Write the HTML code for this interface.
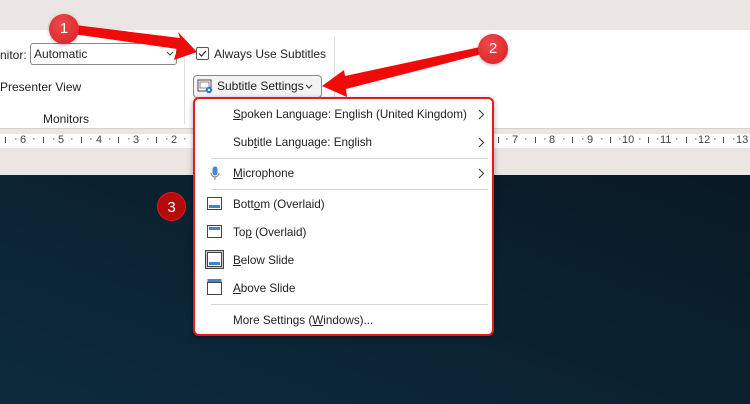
<!DOCTYPE html>
<html><head><meta charset="utf-8"><style>
*{margin:0;padding:0;box-sizing:border-box}
body{width:750px;height:404px;overflow:hidden;position:relative;background:#ebe5e3;font-family:"Liberation Sans",sans-serif;color:#222}
.abs{position:absolute}
.t{font-size:12px;white-space:nowrap}
.ribbon{left:0;top:30px;width:750px;height:99px;background:#fff;border-bottom:1px solid #d6d0ce}
.ruler{left:0;top:134px;width:750px;height:14px;background:#fff;font-size:11px;color:#444}
.slide{left:0;top:175px;width:750px;height:229px;background:linear-gradient(200deg,#081a24 0%,#0b2433 60%,#0c2b3d 100%)}
.menu{left:193px;top:97px;width:301px;height:239px;background:#fff;border:2px solid #e21b1b;border-radius:6px;box-shadow:0 2px 6px rgba(0,0,0,.35)}
.mi{position:absolute;left:38px;font-size:11.7px;color:#222;white-space:nowrap}
.sep{position:absolute;left:16px;right:4px;height:1px;background:#d4d4d4}
.chev{position:absolute;left:283px}
.badge{border-radius:50%;color:#fff;font-size:15px;text-align:center;font-family:"Liberation Sans",sans-serif}
</style></head><body>
<div class="abs ribbon"></div>
<div class="abs t" style="left:0;top:48px">nitor:</div>
<div class="abs" style="left:30px;top:43px;width:147px;height:22px;border:1px solid #8a8a8a;border-radius:3px;background:#fff"></div>
<div class="abs t" style="left:34px;top:47px">Automatic</div>
<svg class="abs" style="left:166px;top:51px" width="8" height="6"><path d="M1 1l3 3 3-3" stroke="#444" fill="none"/></svg>
<div class="abs t" style="left:0;top:80px">Presenter View</div>
<div class="abs t" style="left:43px;top:112px">Monitors</div>
<div class="abs" style="left:184px;top:36px;width:1px;height:88px;background:#dedede"></div>
<div class="abs" style="left:334px;top:36px;width:1px;height:88px;background:#dedede"></div>
<div class="abs" style="left:196px;top:47px;width:13px;height:13px;border:1px solid #555;border-radius:2px;background:#fff"></div>
<svg class="abs" style="left:196px;top:47px" width="13" height="13"><path d="M3 6.5l2.5 2.5 4.5-5" stroke="#222" stroke-width="1.2" fill="none"/></svg>
<div class="abs t" style="left:214px;top:47px">Always Use Subtitles</div>
<div class="abs" style="left:193px;top:75px;width:129px;height:23px;border:1px solid #888;border-radius:4px;background:#f3f3f3"></div>
<svg class="abs" style="left:197px;top:79px" width="17" height="16"><rect x="1" y="1" width="13" height="11" fill="#fff" stroke="#444"/><rect x="3" y="3" width="9" height="6" fill="none" stroke="#666" stroke-width=".8"/><circle cx="12" cy="11" r="3.2" fill="#2b7bd6"/><circle cx="12" cy="11" r="1.2" fill="#fff"/></svg>
<div class="abs t" style="left:217px;top:79px">Subtitle Settings</div>
<svg class="abs" style="left:305px;top:84px" width="8" height="6"><path d="M1 1l3 3 3-3" stroke="#333" fill="none"/></svg>
<div class="abs ruler"></div>
<div class="abs" style="left:0;top:134px;width:750px;height:14px;font-size:11px;color:#444">
<span class="abs" style="left:4px;top:0">ı</span><span class="abs" style="left:14px;top:-1px">·</span><span class="abs" style="left:20px;top:0">6</span><span class="abs" style="left:32px;top:-1px">·</span><span class="abs" style="left:42px;top:0">ı</span><span class="abs" style="left:52px;top:-1px">·</span><span class="abs" style="left:58px;top:0">5</span><span class="abs" style="left:70px;top:-1px">·</span><span class="abs" style="left:80px;top:0">ı</span><span class="abs" style="left:89px;top:-1px">·</span><span class="abs" style="left:96px;top:0">4</span><span class="abs" style="left:108px;top:-1px">·</span><span class="abs" style="left:117px;top:0">ı</span><span class="abs" style="left:127px;top:-1px">·</span><span class="abs" style="left:133px;top:0">3</span><span class="abs" style="left:146px;top:-1px">·</span><span class="abs" style="left:155px;top:0">ı</span><span class="abs" style="left:165px;top:-1px">·</span><span class="abs" style="left:171px;top:0">2</span><span class="abs" style="left:183px;top:-1px">·</span>
<span class="abs" style="left:497px;top:0">ı</span><span class="abs" style="left:505px;top:-1px">·</span><span class="abs" style="left:512px;top:0">7</span><span class="abs" style="left:524px;top:-1px">·</span><span class="abs" style="left:534px;top:0">ı</span><span class="abs" style="left:543px;top:-1px">·</span><span class="abs" style="left:549px;top:0">8</span><span class="abs" style="left:562px;top:-1px">·</span><span class="abs" style="left:571px;top:0">ı</span><span class="abs" style="left:581px;top:-1px">·</span><span class="abs" style="left:587px;top:0">9</span><span class="abs" style="left:600px;top:-1px">·</span><span class="abs" style="left:609px;top:0">ı</span><span class="abs" style="left:618px;top:-1px">·</span><span class="abs" style="left:622px;top:0">10</span><span class="abs" style="left:638px;top:-1px">·</span><span class="abs" style="left:647px;top:0">ı</span><span class="abs" style="left:656px;top:-1px">·</span><span class="abs" style="left:660px;top:0">11</span><span class="abs" style="left:675px;top:-1px">·</span><span class="abs" style="left:685px;top:0">ı</span><span class="abs" style="left:694px;top:-1px">·</span><span class="abs" style="left:698px;top:0">12</span><span class="abs" style="left:713px;top:-1px">·</span><span class="abs" style="left:722px;top:0">ı</span><span class="abs" style="left:732px;top:-1px">·</span><span class="abs" style="left:736px;top:0">13</span>
</div>
<div class="abs slide"></div>
<div class="abs menu">
<div class="mi" style="top:9px"><u>S</u>poken Language: English (United Kingdom)</div><svg class="chev" style="top:10px" width="7" height="11"><path d="M1 1l4.5 4.5L1 10" stroke="#333" fill="none"/></svg>
<div class="mi" style="top:37px">Sub<u>t</u>itle Language: English</div><svg class="chev" style="top:38px" width="7" height="11"><path d="M1 1l4.5 4.5L1 10" stroke="#333" fill="none"/></svg>
<div class="sep" style="top:59px"></div>
<svg style="position:absolute;left:15px;top:67px" width="10" height="16"><rect x="2.5" y="0.5" width="5" height="9" rx="2.5" fill="#4a87cf"/><path d="M1 7a4 4 0 0 0 8 0M5 11v3" stroke="#777" fill="none"/></svg>
<div class="mi" style="top:68px"><u>M</u>icrophone</div><svg class="chev" style="top:69px" width="7" height="11"><path d="M1 1l4.5 4.5L1 10" stroke="#333" fill="none"/></svg>
<div class="sep" style="top:90px"></div>
<svg style="position:absolute;left:12px;top:98px" width="16" height="14"><rect x=".5" y=".5" width="14" height="12" fill="#fff" stroke="#444"/><rect x="2" y="8" width="11" height="3" fill="#3b86d4"/></svg>
<div class="mi" style="top:99px">Bott<u>o</u>m (Overlaid)</div>
<svg style="position:absolute;left:12px;top:126px" width="16" height="14"><rect x=".5" y=".5" width="14" height="12" fill="#fff" stroke="#444"/><rect x="2" y="2" width="11" height="3" fill="#3b86d4"/></svg>
<div class="mi" style="top:127px">To<u>p</u> (Overlaid)</div>
<svg style="position:absolute;left:10px;top:151px" width="19" height="19"><rect x=".5" y=".5" width="18" height="18" fill="#ccc" stroke="#444"/><rect x="2.5" y="2.5" width="14" height="14" fill="#fff" stroke="#444"/><rect x="4" y="12" width="11" height="3" fill="#3b86d4"/></svg>
<div class="mi" style="top:155px"><u>B</u>elow Slide</div>
<svg style="position:absolute;left:12px;top:180px" width="16" height="16"><rect x=".5" y="3.5" width="14" height="12" fill="#fff" stroke="#444"/><rect x=".5" y="0" width="14" height="3" fill="#3b86d4"/></svg>
<div class="mi" style="top:183px"><u>A</u>bove Slide</div>
<div class="sep" style="top:205px"></div>
<div class="mi" style="top:215px">More Settings (<u>W</u>indows)...</div>
</div>
<svg class="abs" style="left:0;top:0" width="750" height="404">
<polygon points="75,25 180,38 178,32 197,52 174,60 177,49 73,34" fill="#f00a0a"/>
<polygon points="480,47 345,76 344,70 322,86 347,97 346,89 482,54" fill="#f00a0a"/>
</svg>
<div class="abs badge" style="left:49px;top:14px;width:30px;height:30px;line-height:30px;background:radial-gradient(circle at 40% 35%,#f04a4a,#d51d22);box-shadow:0 1px 3px rgba(0,0,0,.3)">1</div>
<div class="abs badge" style="left:478px;top:34px;width:30px;height:30px;line-height:30px;background:radial-gradient(circle at 40% 35%,#f04a4a,#d51d22);box-shadow:0 1px 3px rgba(0,0,0,.3)">2</div>
<div class="abs badge" style="left:157px;top:192px;width:29px;height:29px;line-height:29px;background:#b30a0a;border:1.5px solid #e01818">3</div>
</body></html>
